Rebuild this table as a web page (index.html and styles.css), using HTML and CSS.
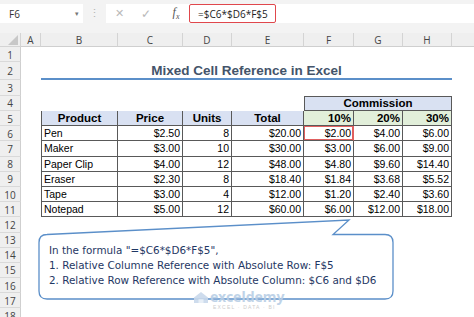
FILE: index.html
```html
<!DOCTYPE html>
<html>
<head>
<meta charset="utf-8">
<link rel="stylesheet" href="styles.css">
</head>
<body>
<div class="app">
  <div class="fbar">
    <div class="namebox"><span class="nb-text">F6</span><span class="nb-arrow">&#9662;</span></div>
    <div class="dots">&#8942;</div>
    <div class="finput">
      <span class="ficon x">&#10005;</span>
      <span class="ficon chk">&#10003;</span>
      <span class="ficon fx"><i>f</i><sub>x</sub></span>
      <span class="formula">=$C6*$D6*F$5</span>
    </div>
  </div>
  <div class="sheet">
    <div class="corner"><svg width="10" height="10" viewBox="0 0 10 10"><polygon points="10,0 10,10 0,10" fill="#c8c8c8"/></svg></div>
    <div class="ch">A</div><div class="ch">B</div><div class="ch">C</div><div class="ch">D</div><div class="ch">E</div><div class="ch">F</div><div class="ch">G</div><div class="ch">H</div><div class="ch last"></div>

    <div class="rh r1">1</div><div class="rh r2">2</div><div class="rh r3">3</div><div class="rh r4">4</div><div class="rh r5">5</div><div class="rh r6">6</div><div class="rh r7">7</div><div class="rh r8">8</div><div class="rh r9">9</div><div class="rh r10">10</div><div class="rh r11">11</div><div class="rh r12">12</div><div class="rh r13">13</div><div class="rh r14">14</div><div class="rh r15">15</div><div class="rh r16">16</div><div class="rh r17">17</div><div class="rh r18">18</div>

    <div class="title">Mixed Cell Reference in Excel</div>

    <div class="table">
      <div class="blank"></div><div class="blank"></div><div class="blank"></div><div class="blank"></div>
      <div class="c comm">Commission</div>

      <div class="c hd cB">Product</div><div class="c hd">Price</div><div class="c hd">Units</div><div class="c hd">Total</div><div class="c hg num">10%</div><div class="c hg num">20%</div><div class="c hg num">30%</div>

      <div class="c cB txt">Pen</div><div class="c num">$2.50</div><div class="c num">8</div><div class="c num">$20.00</div><div class="c num sel">$2.00</div><div class="c num">$4.00</div><div class="c num">$6.00</div>
      <div class="c cB txt">Maker</div><div class="c num">$3.00</div><div class="c num">10</div><div class="c num">$30.00</div><div class="c num">$3.00</div><div class="c num">$6.00</div><div class="c num">$9.00</div>
      <div class="c cB txt">Paper Clip</div><div class="c num">$4.00</div><div class="c num">12</div><div class="c num">$48.00</div><div class="c num">$4.80</div><div class="c num">$9.60</div><div class="c num">$14.40</div>
      <div class="c cB txt">Eraser</div><div class="c num">$2.30</div><div class="c num">8</div><div class="c num">$18.40</div><div class="c num">$1.84</div><div class="c num">$3.68</div><div class="c num">$5.52</div>
      <div class="c cB txt">Tape</div><div class="c num">$3.00</div><div class="c num">4</div><div class="c num">$12.00</div><div class="c num">$1.20</div><div class="c num">$2.40</div><div class="c num">$3.60</div>
      <div class="c cB txt">Notepad</div><div class="c num">$5.00</div><div class="c num">12</div><div class="c num">$60.00</div><div class="c num">$6.00</div><div class="c num">$12.00</div><div class="c num">$18.00</div>
    </div>

    <div class="callout">
      <svg class="bubble" width="400" height="90" viewBox="0 0 400 90">
        <path d="M 47 15.5 L 349 1 L 333 15.5 L 385 15.5 Q 393 15.5 393 23.5 L 393 72 Q 393 80 385 80 L 47 80 Q 39 80 39 72 L 39 23.5 Q 39 15.5 47 15.5 Z" fill="#ffffff" stroke="#5b8fc9" stroke-width="1.3"/>
      </svg>
      <div class="ctext">
        <div>In the formula "=$C6*$D6*F$5",</div>
        <div>1. Relative Columne Reference with Absolute Row: F$5</div>
        <div>2. Relative Row Reference with Absolute Column: $C6 and $D6</div>
      </div>
      <div class="wm">
        <svg width="16" height="13" viewBox="0 0 16 13"><path d="M1 6.5 L8 1 L15 6.5 L15 12 L1 12 Z" fill="#c9d9ec"/><path d="M5.5 12 L5.5 8 L10.5 8 L10.5 12" fill="#e6eef7"/></svg>
        <div class="wm-txt"><span class="wm-name">exceldemy</span><span class="wm-sub">EXCEL · DATA · BI</span></div>
      </div>
    </div>
  </div>
</div>
</body>
</html>
```

FILE: styles.css
```css
* { box-sizing: border-box; margin: 0; padding: 0; }
html, body { width: 474px; height: 317px; overflow: hidden; background: #ffffff; }
body { font-family: "Liberation Sans", Arial, sans-serif; color: #000; }
.app { width: 474px; height: 317px; display: flex; flex-direction: column; overflow: hidden; }

.fbar { height: 33px; flex: none; background: #f3f3f3; display: flex; align-items: flex-start; padding-top: 4px; }
.namebox { width: 83px; height: 19px; background: #fff; display: flex; align-items: center; justify-content: space-between; padding: 0 4px 0 9px; font-family: "Open Sans", sans-serif; font-size: 10px; color: #333; }
.nb-arrow { font-size: 7px; color: #777; }
.dots { width: 23px; height: 19px; display: flex; align-items: center; justify-content: center; color: #b5b5b5; font-size: 11px; }
.finput { flex: 1; height: 19px; background: #fff; display: flex; align-items: center; padding-left: 6px; }
.ficon { color: #b9b9b9; font-size: 12px; text-align: center; }
.ficon.x { width: 14px; font-size: 11px; }
.ficon.chk { width: 40px; }
.ficon.fx { color: #555; font-family: "Liberation Serif", serif; font-size: 12px; width: 20px; }
.ficon.fx sub { font-size: 8px; font-style: italic; }
.formula { margin-left: 3px; height: 19px; border: 1.5px solid #e0474c; border-radius: 2px; width: 87px; display: flex; align-items: center; padding-left: 8px; font-family: "Open Sans", sans-serif; font-size: 10px; color: #222; }

.sheet { position: relative; flex: none; display: grid; grid-template-columns: 21px 20px 77px 65px 49px 72px 50px 49px 49px 1fr; grid-template-rows: 14px 15px 18px 15.5px 15.5px repeat(14, 15.2px); }
.corner { background: #efefef; border-bottom: 1px solid #d4d4d4; border-right: 1px solid #d4d4d4; display: flex; align-items: flex-end; justify-content: flex-end; padding: 0 2px 1px 0; }
.ch { background: #efefef; border-bottom: 1px solid #cfcfcf; border-right: 1px solid #d4d4d4; font-family: "Open Sans", sans-serif; font-size: 10px; color: #444; display: flex; align-items: center; justify-content: center; }
.ch.last { border-right: none; }
.rh { grid-column: 1; background: #efefef; border-bottom: 1px solid #d9d9d9; border-right: 1px solid #cfcfcf; font-family: "Open Sans", sans-serif; font-size: 10px; color: #444; display: flex; align-items: center; justify-content: center; padding-top: 1px; }
.r1 { grid-row: 2; } .r2 { grid-row: 3; } .r3 { grid-row: 4; } .r4 { grid-row: 5; } .r5 { grid-row: 6; } .r6 { grid-row: 7; } .r7 { grid-row: 8; } .r8 { grid-row: 9; } .r9 { grid-row: 10; } .r10 { grid-row: 11; } .r11 { grid-row: 12; } .r12 { grid-row: 13; } .r13 { grid-row: 14; } .r14 { grid-row: 15; } .r15 { grid-row: 16; } .r16 { grid-row: 17; } .r17 { grid-row: 18; } .r18 { grid-row: 19; }

.title { grid-column: 3 / 10; grid-row: 3; border-bottom: 2px solid #5b8fc9; text-align: center; font-weight: bold; font-size: 13.5px; color: #44546a; line-height: 15px; padding-top: 1px; }

.table { grid-column: 3 / 10; grid-row: 5 / 13; display: grid; grid-template-columns: 77px 65px 49px 72px 50px 49px 49px; grid-template-rows: 15.5px repeat(7, 15.2px); }
.c { border-right: 1px solid #595959; border-bottom: 1px solid #595959; font-size: 10.5px; display: flex; align-items: center; padding: 0 2px; white-space: nowrap; }
.comm { grid-column: span 3; border-top: 1px solid #595959; border-left: 1px solid #595959; background: #d9e1f2; justify-content: center; font-weight: bold; font-size: 11.5px; }
.hd { background: #d9e1f2; justify-content: center; font-weight: bold; font-size: 11.5px; }
.hg { background: #e2efda; font-weight: bold; font-size: 11.5px; }
.cB { border-left: 1px solid #595959; }
.num { justify-content: flex-end; }
.txt { justify-content: flex-start; padding-left: 2px; }
.sel { box-shadow: inset 0 0 0 1px #e06060; border-right-color: #e06060; }

.callout { position: absolute; left: 0; top: 186px; width: 474px; height: 100px; pointer-events: none; }
.bubble { position: absolute; left: 0; top: 0; }
.ctext { position: absolute; left: 49px; top: 24px; font-family: "DejaVu Sans", sans-serif; font-size: 10.4px; line-height: 15.2px; color: #1f3864; }
.wm { position: absolute; left: 193px; top: 70px; display: flex; align-items: flex-start; gap: 1px; opacity: 0.9; }
.wm svg { margin-top: 2px; }
.wm-txt { display: flex; flex-direction: column; }
.wm-name { font-family: "Noto Sans", sans-serif; font-size: 14px; line-height: 15px; color: #b9cfe6; font-weight: bold; }
.wm-sub { font-size: 5px; line-height: 6px; color: #c8c8c8; letter-spacing: 1.2px; padding-left: 3px; }
```
